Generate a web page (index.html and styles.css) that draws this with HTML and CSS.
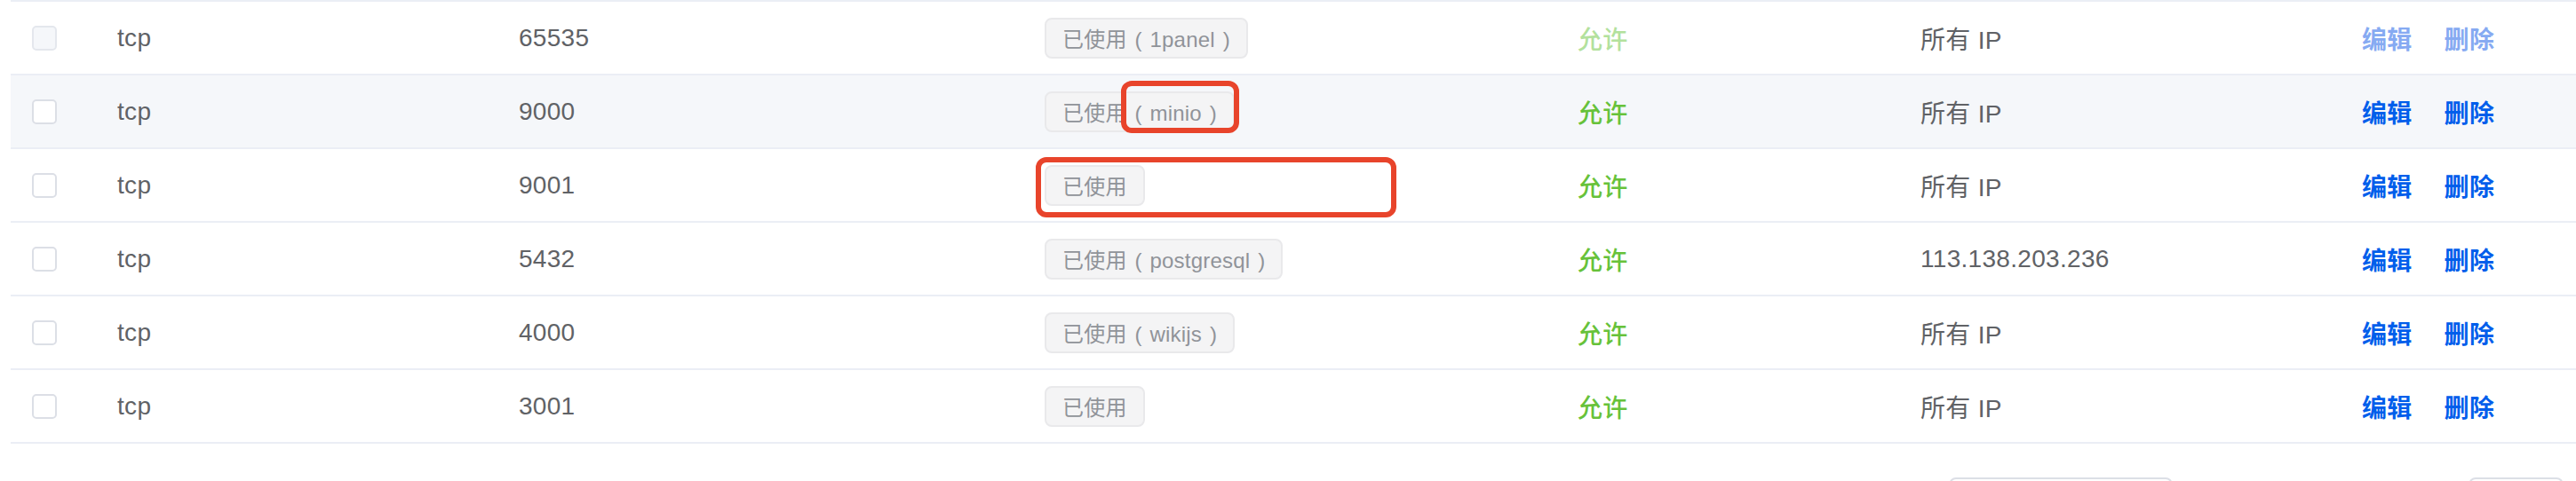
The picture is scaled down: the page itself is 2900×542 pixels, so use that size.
FILE: index.html
```html
<!DOCTYPE html>
<html lang="zh-CN">
<head>
  <meta charset="UTF-8">
  <meta name="viewport" content="width=device-width, initial-scale=1.0">
  <title>端口规则</title>
  <link rel="stylesheet" href="styles.css">
</head>
<body>
  <div class="table">
    <div class="row disabled">
      <div class="cell"><span class="checkbox"></span></div>
      <div class="cell">tcp</div>
      <div class="cell">65535</div>
      <div class="cell"><span class="tag">已使用 ( 1panel )</span></div>
      <div class="cell allow">允许</div>
      <div class="cell">所有 IP</div>
      <div class="cell ops"><a class="link">编辑</a><a class="link">删除</a></div>
    </div>
    <div class="row hover">
      <div class="cell"><span class="checkbox"></span></div>
      <div class="cell">tcp</div>
      <div class="cell">9000</div>
      <div class="cell"><span class="tag">已使用 ( minio )</span></div>
      <div class="cell allow">允许</div>
      <div class="cell">所有 IP</div>
      <div class="cell ops"><a class="link">编辑</a><a class="link">删除</a></div>
    </div>
    <div class="row">
      <div class="cell"><span class="checkbox"></span></div>
      <div class="cell">tcp</div>
      <div class="cell">9001</div>
      <div class="cell"><span class="tag">已使用</span></div>
      <div class="cell allow">允许</div>
      <div class="cell">所有 IP</div>
      <div class="cell ops"><a class="link">编辑</a><a class="link">删除</a></div>
    </div>
    <div class="row">
      <div class="cell"><span class="checkbox"></span></div>
      <div class="cell">tcp</div>
      <div class="cell">5432</div>
      <div class="cell"><span class="tag">已使用 ( postgresql )</span></div>
      <div class="cell allow">允许</div>
      <div class="cell">113.138.203.236</div>
      <div class="cell ops"><a class="link">编辑</a><a class="link">删除</a></div>
    </div>
    <div class="row">
      <div class="cell"><span class="checkbox"></span></div>
      <div class="cell">tcp</div>
      <div class="cell">4000</div>
      <div class="cell"><span class="tag">已使用 ( wikijs )</span></div>
      <div class="cell allow">允许</div>
      <div class="cell">所有 IP</div>
      <div class="cell ops"><a class="link">编辑</a><a class="link">删除</a></div>
    </div>
    <div class="row">
      <div class="cell"><span class="checkbox"></span></div>
      <div class="cell">tcp</div>
      <div class="cell">3001</div>
      <div class="cell"><span class="tag">已使用</span></div>
      <div class="cell allow">允许</div>
      <div class="cell">所有 IP</div>
      <div class="cell ops"><a class="link">编辑</a><a class="link">删除</a></div>
    </div>
  </div>

  <div class="pager">
    <div class="pager-size"></div>
    <div class="pager-jump"></div>
  </div>

  <!-- annotation marks drawn over the screenshot -->
  <div class="mark mark-1"></div>
  <div class="mark mark-2"></div>
</body>
</html>
```

FILE: styles.css
```css
body {
  margin: 0;
  background: #fff;
  font-family: "Liberation Sans", "Noto Sans CJK SC", sans-serif;
  color: #606266;
  overflow: hidden;
}
.table {
  margin-left: 12px;
  border-top: 2px solid #ebeef5;
}
.row {
  display: grid;
  grid-template-columns: 96px 452px 592px 600px 386px 497px 1fr;
  height: 81px;
  border-bottom: 2px solid #ebeef5;
}
.row.hover {
  background: #f5f7fa;
}
.cell {
  display: flex;
  align-items: center;
  padding: 0 24px;
  font-size: 28px;
  letter-spacing: 0.3px;
  white-space: nowrap;
}
.checkbox {
  width: 28px;
  height: 28px;
  box-sizing: border-box;
  border: 2px solid #dcdfe6;
  border-radius: 5px;
  background: #fff;
}
.disabled .checkbox {
  background: #f5f7fa;
  border-color: #e4e7ed;
}
.tag {
  display: inline-flex;
  align-items: center;
  height: 46px;
  box-sizing: border-box;
  padding: 0 18px;
  border: 2px solid #e9e9eb;
  border-radius: 8px;
  background: #f4f4f5;
  color: #909399;
  font-size: 24px;
  letter-spacing: 0.2px;
  word-spacing: 2px;
  white-space: pre;
}
.allow {
  color: #67c23a;
  font-family: "Noto Sans CJK SC", sans-serif;
  font-weight: 500;
}
.disabled .allow {
  color: #b3e19d;
}
.ops {
  gap: 36px;
}
.link {
  color: #005eeb;
  font-family: "Noto Sans CJK SC", sans-serif;
  font-weight: 700;
  cursor: pointer;
}
.disabled .link {
  color: #86aaf2;
}
.pager {
  display: flex;
  margin-top: 38px;
  padding-left: 2194px;
}
.pager-size,
.pager-jump {
  height: 64px;
  box-sizing: border-box;
  border: 2px solid #dcdfe6;
  border-radius: 8px;
}
.pager-size {
  width: 252px;
}
.pager-jump {
  width: 107px;
  margin-left: 333px;
}
.mark {
  position: absolute;
  box-sizing: border-box;
  border: 6px solid #e8442b;
  border-radius: 12px;
}
.mark-1 {
  left: 1262px;
  top: 91px;
  width: 133px;
  height: 59px;
}
.mark-2 {
  left: 1166px;
  top: 177px;
  width: 406px;
  height: 68px;
}
```
